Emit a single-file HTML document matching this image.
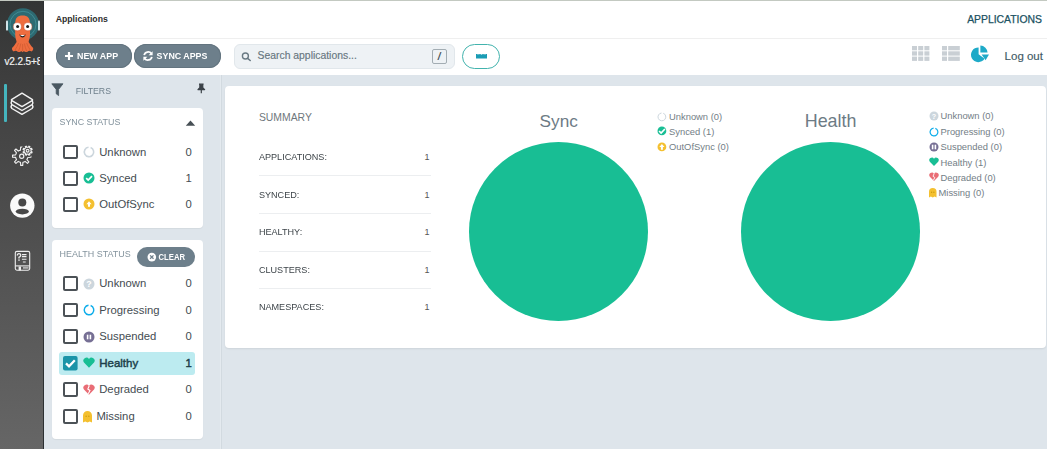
<!DOCTYPE html>
<html><head><meta charset="utf-8"><style>
html,body{margin:0;padding:0}
body{width:1047px;height:449px;overflow:hidden;position:relative;background:#dee5eb;font-family:"Liberation Sans",sans-serif}
.t{position:absolute;white-space:nowrap;line-height:1}
.b{position:absolute}
svg.b{overflow:visible}
</style></head><body>
<div class="b" style="left:0px;top:0px;width:1047px;height:1px;background:#c3c9c1"></div>
<div class="b" style="left:44px;top:1px;width:1003px;height:37px;background:#fff"></div>
<div class="b" style="left:44px;top:38px;width:1003px;height:1px;background:#efefef"></div>
<div class="b" style="left:44px;top:39px;width:1003px;height:36.2px;background:#fff"></div>
<div class="b" style="left:0px;top:1px;width:43px;height:448px;background:linear-gradient(#333535 0px,#3c3c3c 60px,#454545 130px,#4f4f4f 234px,#5b5b5b 344px,#666 449px)"></div>
<div class="b" style="left:43px;top:1px;width:1px;height:448px;background:#2c3032"></div>
<div class="t" style="left:55.7px;top:15.34px;font-size:8.7px;color:#2d2d2d;font-weight:bold;">Applications</div>
<div class="t" style="left:1042px;top:14.60px;font-size:10.4px;color:#1b5262;font-weight:normal;transform:translateX(-100%);transform-origin:0 8.80px;-webkit-text-stroke:0.25px #1b5262">APPLICATIONS</div>
<div class="b" style="left:56px;top:44.2px;width:75.5px;height:24px;background:#6d7f8b;border-radius:13px;box-shadow:inset 0 0 0 1px #63747f"></div>
<div class="b" style="left:133.6px;top:44.2px;width:87.4px;height:24px;background:#6d7f8b;border-radius:13px;box-shadow:inset 0 0 0 1px #63747f"></div>
<svg class="b" style="left:64px;top:51px" width="10" height="10" viewBox="0 0 10 10"><path d="M5 1v8M1 5h8" stroke="#fff" stroke-width="2.2" stroke-linecap="butt"/></svg>
<div class="t" style="left:77px;top:51.87px;font-size:8.9px;color:#fff;font-weight:bold;transform: scaleY(1.06);transform-origin:0 7.53px;">NEW APP</div>
<svg class="b" style="left:142px;top:50px" width="12" height="12" viewBox="0 0 12 12"><path d="M2.2 5.2A4 4 0 0 1 9.4 3.6" stroke="#fff" stroke-width="1.8" fill="none"/><path d="M10.6 1.2v4h-4z" fill="#fff"/><path d="M9.8 6.8A4 4 0 0 1 2.6 8.4" stroke="#fff" stroke-width="1.8" fill="none"/><path d="M1.4 10.8v-4h4z" fill="#fff"/></svg>
<div class="t" style="left:156.6px;top:51.91px;font-size:8.85px;color:#fff;font-weight:bold;transform: scaleY(1.06);transform-origin:0 7.49px;">SYNC APPS</div>
<div class="b" style="left:234px;top:44px;width:220.5px;height:25px;background:#eef2f5;border:1px solid #e1e7eb;box-sizing:border-box;border-radius:6px"></div>
<svg class="b" style="left:241px;top:51.8px" width="10" height="9" viewBox="0 0 10 9"><circle cx="4.4" cy="4" r="3" stroke="#6a7a84" stroke-width="1.4" fill="none"/><path d="M6.6 6.3l2.6 2.2" stroke="#6a7a84" stroke-width="1.6" stroke-linecap="round"/></svg>
<div class="t" style="left:257.5px;top:51.40px;font-size:10.4px;color:#67767f;font-weight:normal;-webkit-text-stroke:0.15px #67767f">Search applications...</div>
<div class="b" style="left:431.7px;top:49.4px;width:15px;height:14.3px;border:1px solid #a3adb3;border-radius:2px;box-sizing:border-box"></div>
<div class="t" style="left:439.2px;top:52.03px;font-size:10px;color:#4a5258;font-weight:bold;transform:translateX(-50%);transform-origin:0 8.46px;font-style:italic">/</div>
<div class="b" style="left:462px;top:44.2px;width:37.5px;height:24.6px;border:1px solid #42b3ad;border-radius:13px;box-sizing:border-box;background:#fff"></div>
<svg class="b" style="left:475.5px;top:53px" width="11" height="6" viewBox="0 0 11 6"><rect x="0" y="1" width="11" height="4.5" fill="#1a9cb4"/><path d="M2 0.6v1.4M4 0.6v1M5.5 0.6v1.4M7 0.6v1M9 0.6v1.4" stroke="#fff" stroke-width="0.6"/></svg>
<svg class="b" style="left:912px;top:46px" width="18" height="15" viewBox="0 0 18 15"><rect x="0.0" y="0.0" width="5" height="4.3" fill="#c9cfd4"/><rect x="6.2" y="0.0" width="5" height="4.3" fill="#c9cfd4"/><rect x="12.4" y="0.0" width="5" height="4.3" fill="#c9cfd4"/><rect x="0.0" y="5.3" width="5" height="4.3" fill="#c9cfd4"/><rect x="6.2" y="5.3" width="5" height="4.3" fill="#c9cfd4"/><rect x="12.4" y="5.3" width="5" height="4.3" fill="#c9cfd4"/><rect x="0.0" y="10.6" width="5" height="4.3" fill="#c9cfd4"/><rect x="6.2" y="10.6" width="5" height="4.3" fill="#c9cfd4"/><rect x="12.4" y="10.6" width="5" height="4.3" fill="#c9cfd4"/></svg>
<svg class="b" style="left:942px;top:46px" width="18" height="15" viewBox="0 0 18 15"><rect x="0" y="0.0" width="5" height="4.3" fill="#c9cfd4"/><rect x="6.2" y="0.0" width="11.6" height="4.3" fill="#c9cfd4"/><rect x="0" y="5.3" width="5" height="4.3" fill="#c9cfd4"/><rect x="6.2" y="5.3" width="11.6" height="4.3" fill="#c9cfd4"/><rect x="0" y="10.6" width="5" height="4.3" fill="#c9cfd4"/><rect x="6.2" y="10.6" width="11.6" height="4.3" fill="#c9cfd4"/></svg>
<svg class="b" style="left:971px;top:45px" width="19" height="18" viewBox="0 0 19 18"><path d="M7.6 2.4A7.4 7.4 0 1 0 13.6 13.8L7.6 9.2Z" fill="#1eaac8"/><path d="M9.4 0.6A7.4 7.4 0 0 1 16.6 7.6H9.4Z" fill="#1eaac8"/><path d="M10.6 9.4H18L14.6 15.2Z" fill="#1eaac8"/></svg>
<div class="t" style="left:1004.6px;top:50.87px;font-size:11.5px;color:#3f5a66;font-weight:normal;-webkit-text-stroke:0.15px #3f5a66">Log out</div>
<div class="b" style="left:4.4px;top:83.6px;width:2.2px;height:38.6px;background:#45b5be;border-radius:1.1px"></div>
<svg class="b" style="left:9px;top:91px" width="26" height="26" viewBox="0 0 26 26"><g fill="none" stroke="#f2f2f2" stroke-width="1.4" stroke-linejoin="round" stroke-linecap="round"><path d="M13.00 2.10 L23.10 8.30 Q24.10 9.00 23.10 9.70 L13.00 15.60 L2.90 9.70 Q1.90 9.00 2.90 8.30 Z"/><path d="M2.60 10.10 Q1.50 11.60 2.90 13.60 L13.00 19.50 L23.10 13.60 Q24.50 11.60 23.40 10.10"/><path d="M2.60 14.00 Q1.50 15.50 2.90 17.50 L13.00 23.40 L23.10 17.50 Q24.50 15.50 23.40 14.00"/></g></svg>
<svg class="b" style="left:8px;top:142px" width="28" height="28" viewBox="0 0 28 28"><defs><mask id="gm"><rect width="28" height="28" fill="#fff"/><circle cx="19.6" cy="8.7" r="6.6" fill="#000"/></mask></defs><g fill="none" stroke="#eee" stroke-width="1.15" stroke-linejoin="round"><path mask="url(#gm)" d="M19.78 12.99 L22.84 13.19 L22.84 15.21 L19.78 15.41 A6.20 6.20 0 0 1 18.86 17.64 L20.88 19.95 L19.45 21.38 L17.14 19.36 A6.20 6.20 0 0 1 14.91 20.28 L14.71 23.34 L12.69 23.34 L12.49 20.28 A6.20 6.20 0 0 1 10.26 19.36 L7.95 21.38 L6.52 19.95 L8.54 17.64 A6.20 6.20 0 0 1 7.62 15.41 L4.56 15.21 L4.56 13.19 L7.62 12.99 A6.20 6.20 0 0 1 8.54 10.76 L6.52 8.45 L7.95 7.02 L10.26 9.04 A6.20 6.20 0 0 1 12.49 8.12 L12.69 5.06 L14.71 5.06 L14.91 8.12 A6.20 6.20 0 0 1 17.14 9.04 L19.45 7.02 L20.88 8.45 L18.86 10.76 A6.20 6.20 0 0 1 19.78 12.99 Z"/><circle cx="13.7" cy="14.2" r="2.1"/><path d="M22.94 9.35 L24.13 9.96 L23.71 10.99 L22.43 10.58 A3.40 3.40 0 0 1 21.50 11.52 L21.91 12.79 L20.89 13.22 L20.27 12.03 A3.40 3.40 0 0 1 18.95 12.04 L18.34 13.23 L17.31 12.81 L17.72 11.53 A3.40 3.40 0 0 1 16.78 10.60 L15.51 11.01 L15.08 9.99 L16.27 9.37 A3.40 3.40 0 0 1 16.26 8.05 L15.07 7.44 L15.49 6.41 L16.77 6.82 A3.40 3.40 0 0 1 17.70 5.88 L17.29 4.61 L18.31 4.18 L18.93 5.37 A3.40 3.40 0 0 1 20.25 5.36 L20.86 4.17 L21.89 4.59 L21.48 5.87 A3.40 3.40 0 0 1 22.42 6.80 L23.69 6.39 L24.12 7.41 L22.93 8.03 A3.40 3.40 0 0 1 22.94 9.35 Z"/><circle cx="19.6" cy="8.7" r="1.4"/></g></svg>
<svg class="b" style="left:10px;top:193px" width="25" height="25" viewBox="0 0 25 25"><circle cx="12.3" cy="12.6" r="12.2" fill="#fafafa"/><circle cx="12.3" cy="9.6" r="4" fill="#474747"/><ellipse cx="12.3" cy="18.6" rx="6.6" ry="2.8" fill="#474747"/></svg>
<svg class="b" style="left:13px;top:249px" width="20" height="24" viewBox="0 0 20 24"><g fill="none" stroke="#eee" stroke-width="1.1"><rect x="2.3" y="2.4" width="14.4" height="18.8" rx="1.6"/><path d="M2.3 16.9H16.7"/><path d="M4.3 6.6Q4.3 4.6 6 4.6Q7.7 4.6 7.7 6.3Q7.7 7.6 6 8.3V9.6" stroke-width="1.3"/></g><rect x="5.3" y="10.4" width="1.4" height="1.4" fill="#eee"/><path d="M8.9 5.6h4.6M8.9 7.6h4.6M8.9 10.3h4.6M9.9 13h2.8" stroke="#eee" stroke-width="1.1"/><path d="M10 18.9h5.6" stroke="#bbb" stroke-width="1.6"/><rect x="5.6" y="17.5" width="2.4" height="4" fill="#eee"/></svg>
<svg class="b" style="left:4px;top:5px" width="38" height="52" viewBox="0 0 38 52"><circle cx="19" cy="19.3" r="16" fill="#2d6a72"/><circle cx="19" cy="19.3" r="13" fill="none" stroke="#428e96" stroke-width="0.9"/><rect x="2" y="15.6" width="2" height="10" rx="0.9" fill="#cfe3e8"/><rect x="34" y="15.6" width="2" height="10" rx="0.9" fill="#cfe3e8"/><path d="M11.2 19C11.2 13 13.5 10.6 18.6 10.6S26 13 26 19V30C26 33 24.8 35 24.6 37Q27 41 29.2 43Q29.7 45.6 27.6 46.6Q26 45.2 24.5 46Q23 47.6 21 46.7Q19.6 45.7 18.6 47.2Q17.6 45.7 16.2 46.7Q14.2 47.6 12.7 46Q11.2 45.2 9.6 46.6Q7.5 45.6 8 43Q10.2 41 12.6 37C12.4 35 11.2 33 11.2 30Z" fill="#ee6d3f"/><path d="M14.6 38Q13 42 11 45M16.8 38.5Q16 43 14.5 46M18.6 39V46M20.4 38.5Q21.2 43 22.7 46M22.6 38Q24.2 42 26.2 45" stroke="#c9552e" stroke-width="0.6" fill="none"/><circle cx="13.3" cy="21.7" r="4.1" fill="#fff" stroke="#c94f2a" stroke-width="0.5"/><circle cx="23.9" cy="21.7" r="4.1" fill="#fff" stroke="#c94f2a" stroke-width="0.5"/><circle cx="13.6" cy="21.5" r="1.5" fill="#1a1a1a"/><circle cx="23.6" cy="21.5" r="1.5" fill="#1a1a1a"/><path d="M15 29.4Q18.5 35.6 22 29.4Q18.5 30.6 15 29.4Z" fill="#1a1a1a"/><path d="M15.9 30H21.1Q18.5 32.3 15.9 30Z" fill="#fff"/></svg>
<div class="t" style="left:4.4px;top:56.73px;font-size:10px;color:#f0f0f0;font-weight:normal;letter-spacing:-0.1px;width:35.8px;overflow:hidden;-webkit-text-stroke:0.2px #f0f0f0">v2.2.5+8</div>
<div class="b" style="left:220px;top:75px;width:1px;height:374px;background:#e4eaef"></div>
<div class="b" style="left:221px;top:75px;width:1px;height:374px;background:#d2dae0"></div>
<svg class="b" style="left:51px;top:83px" width="13" height="13" viewBox="0 0 13 13"><path d="M0.8 0.8H12L7.6 6.4V12.6L5.2 10.8V6.4Z" fill="#4a5862" stroke="#4a5862" stroke-width="0.8" stroke-linejoin="round"/></svg>
<div class="t" style="left:75.7px;top:86.59px;font-size:8.75px;color:#6d7f8b;font-weight:normal;transform: scaleY(1.08);transform-origin:0 7.41px;">FILTERS</div>
<svg class="b" style="left:196px;top:83px" width="11" height="11" viewBox="0 0 11 11"><path d="M3 1.2h4.6M3.9 1.2v3.4L2 6.6h6.6L6.7 4.6V1.2" stroke="#3b4248" stroke-width="1.3" fill="#3b4248" stroke-linejoin="round"/><path d="M5.3 6.6v3.6" stroke="#3b4248" stroke-width="1.2"/></svg>
<div class="b" style="left:51.6px;top:107.6px;width:151.4px;height:120px;background:#fff;border-radius:4px;box-shadow:0 1px 1px rgba(0,0,0,0.05)"></div>
<div class="t" style="left:59.5px;top:117.87px;font-size:8.9px;color:#83939d;font-weight:normal;transform: scaleY(1.05);transform-origin:0 7.53px;">SYNC STATUS</div>
<svg class="b" style="left:185px;top:120px" width="11" height="6" viewBox="0 0 11 6"><path d="M0.8 5.8L5.5 0.6L10.2 5.8Z" fill="#474f55"/></svg>
<div class="b" style="left:63px;top:144.5px;width:14.6px;height:14.6px;border:2px solid #4c5257;border-radius:2px;box-sizing:border-box"></div>
<svg class="b" style="left:83.20px;top:145.80px" width="12.0" height="12.0" viewBox="0 0 12.0 12.0"><path d="M7.61 1.58A4.7 4.7 0 1 1 5.53 1.32" fill="none" stroke="#ccd6dd" stroke-width="1.6"/></svg>
<div class="t" style="left:99.2px;top:146.53px;font-size:11.3px;color:#444c52;font-weight:normal;">Unknown</div>
<div class="t" style="left:191.8px;top:146.53px;font-size:11.3px;color:#444c52;font-weight:normal;transform:translateX(-100%);transform-origin:0 9.57px;">0</div>
<div class="b" style="left:63px;top:171.1px;width:14.6px;height:14.6px;border:2px solid #4c5257;border-radius:2px;box-sizing:border-box"></div>
<svg class="b" style="left:83.20px;top:172.40px" width="12.0" height="12.0" viewBox="0 0 12.0 12.0"><circle cx="6.0" cy="6.0" r="5.5" fill="#18be94"/><path d="M3.2 6.1L5.2 8.1L9.0 4.1" stroke="#fff" stroke-width="1.7" fill="none"/></svg>
<div class="t" style="left:99.2px;top:173.13px;font-size:11.3px;color:#444c52;font-weight:normal;">Synced</div>
<div class="t" style="left:191.8px;top:173.13px;font-size:11.3px;color:#444c52;font-weight:normal;transform:translateX(-100%);transform-origin:0 9.57px;">1</div>
<div class="b" style="left:63px;top:197.1px;width:14.6px;height:14.6px;border:2px solid #4c5257;border-radius:2px;box-sizing:border-box"></div>
<svg class="b" style="left:83.20px;top:198.40px" width="12.0" height="12.0" viewBox="0 0 12.0 12.0"><circle cx="6.0" cy="6.0" r="5.5" fill="#f4c030"/><path d="M6.0 3.2L8.6 6.2H7.0V8.8H5.0V6.2H3.4Z" fill="#fff"/></svg>
<div class="t" style="left:99.2px;top:199.13px;font-size:11.3px;color:#444c52;font-weight:normal;">OutOfSync</div>
<div class="t" style="left:191.8px;top:199.13px;font-size:11.3px;color:#444c52;font-weight:normal;transform:translateX(-100%);transform-origin:0 9.57px;">0</div>
<div class="b" style="left:51.9px;top:239.6px;width:151px;height:199px;background:#fff;border-radius:4px;box-shadow:0 1px 1px rgba(0,0,0,0.05)"></div>
<div class="t" style="left:59.6px;top:249.62px;font-size:8.95px;color:#83939d;font-weight:normal;transform: scaleY(1.05);transform-origin:0 7.58px;">HEALTH STATUS</div>
<div class="b" style="left:136.6px;top:247.3px;width:58.4px;height:19.5px;background:#6d7f8b;border-radius:10px"></div>
<svg class="b" style="left:147px;top:251.5px" width="10" height="10" viewBox="0 0 10 10"><circle cx="4.8" cy="5.1" r="4.3" fill="#fff"/><path d="M3.1 3.4L6.5 6.8M6.5 3.4L3.1 6.8" stroke="#6d7f8b" stroke-width="1.3"/></svg>
<div class="t" style="left:158.5px;top:253.88px;font-size:7.7px;color:#fff;font-weight:bold;transform: scaleY(1.2);transform-origin:0 6.52px;">CLEAR</div>
<div class="b" style="left:59.2px;top:351.8px;width:136.3px;height:23px;background:#bcebf0;border-radius:3px"></div>
<div class="b" style="left:63px;top:276.2px;width:14.6px;height:14.6px;border:2px solid #4c5257;border-radius:2px;box-sizing:border-box"></div>
<svg class="b" style="left:83.20px;top:277.50px" width="12.0" height="12.0" viewBox="0 0 12.0 12.0"><circle cx="6.0" cy="6.0" r="5.5" fill="#ccd6dd"/><text x="6.0" y="9.2" text-anchor="middle" font-size="8.8" font-weight="bold" font-family="Liberation Sans" fill="#fff">?</text></svg>
<div class="t" style="left:99.2px;top:278.23px;font-size:11.3px;color:#444c52;font-weight:normal;">Unknown</div>
<div class="t" style="left:191.8px;top:278.23px;font-size:11.3px;color:#444c52;font-weight:normal;transform:translateX(-100%);transform-origin:0 9.57px;">0</div>
<div class="b" style="left:63px;top:302.8px;width:14.6px;height:14.6px;border:2px solid #4c5257;border-radius:2px;box-sizing:border-box"></div>
<svg class="b" style="left:83.20px;top:304.10px" width="12.0" height="12.0" viewBox="0 0 12.0 12.0"><path d="M7.64 1.51A4.775 4.775 0 1 1 5.52 1.25" fill="none" stroke="#0dadea" stroke-width="1.45"/></svg>
<div class="t" style="left:99.2px;top:304.83px;font-size:11.3px;color:#444c52;font-weight:normal;">Progressing</div>
<div class="t" style="left:191.8px;top:304.83px;font-size:11.3px;color:#444c52;font-weight:normal;transform:translateX(-100%);transform-origin:0 9.57px;">0</div>
<div class="b" style="left:63px;top:329.3px;width:14.6px;height:14.6px;border:2px solid #4c5257;border-radius:2px;box-sizing:border-box"></div>
<svg class="b" style="left:83.20px;top:330.60px" width="12.0" height="12.0" viewBox="0 0 12.0 12.0"><circle cx="6.0" cy="6.0" r="5.5" fill="#766f94"/><rect x="3.8" y="3.7" width="1.6" height="4.6" fill="#fff"/><rect x="6.6" y="3.7" width="1.6" height="4.6" fill="#fff"/></svg>
<div class="t" style="left:99.2px;top:331.33px;font-size:11.3px;color:#444c52;font-weight:normal;">Suspended</div>
<div class="t" style="left:191.8px;top:331.33px;font-size:11.3px;color:#444c52;font-weight:normal;transform:translateX(-100%);transform-origin:0 9.57px;">0</div>
<svg class="b" style="left:63px;top:355.8px" width="15" height="15" viewBox="0 0 15 15"><rect x="0" y="0" width="14.6" height="14.6" rx="2" fill="#1a94a8"/><path d="M3 7.4L6 10.3L11.8 4.3" stroke="#fff" stroke-width="2.3" fill="none"/></svg>
<svg class="b" style="left:83.20px;top:358.00px" width="12" height="10.2" viewBox="0 0 12 10.2"><path d="M6.0 10.2L0.96 5.04A2.88 2.88 0 0 1 6.0 1.44A2.88 2.88 0 0 1 11.040000000000001 5.04Z" fill="#18be94" transform="translate(0 -0.5)"/></svg>
<div class="t" style="left:99.2px;top:357.67px;font-size:11.5px;color:#1d3f4b;font-weight:normal;-webkit-text-stroke:0.45px #1d3f4b">Healthy</div>
<div class="t" style="left:191.8px;top:357.83px;font-size:11.3px;color:#1d3f4b;font-weight:normal;transform:translateX(-100%);transform-origin:0 9.57px;-webkit-text-stroke:0.45px #1d3f4b">1</div>
<div class="b" style="left:63px;top:382.4px;width:14.6px;height:14.6px;border:2px solid #4c5257;border-radius:2px;box-sizing:border-box"></div>
<svg class="b" style="left:83.20px;top:384.60px" width="12" height="10.2" viewBox="0 0 12 10.2"><g transform="translate(0 -0.5)"><path d="M6.0 10.2L0.96 5.04A2.88 2.88 0 0 1 6.0 1.44A2.88 2.88 0 0 1 11.040000000000001 5.04Z" fill="#e96d76"/><path d="M6.24 1.2000000000000002L4.800000000000001 4.5600000000000005L6.959999999999999 6.0L5.28 9.36" stroke="#fff" stroke-width="1.08" fill="none"/></g></svg>
<div class="t" style="left:99.2px;top:384.43px;font-size:11.3px;color:#444c52;font-weight:normal;">Degraded</div>
<div class="t" style="left:191.8px;top:384.43px;font-size:11.3px;color:#444c52;font-weight:normal;transform:translateX(-100%);transform-origin:0 9.57px;">0</div>
<div class="b" style="left:63px;top:409.3px;width:14.6px;height:14.6px;border:2px solid #4c5257;border-radius:2px;box-sizing:border-box"></div>
<svg class="b" style="left:83.30px;top:410.85px" width="9" height="11.5" viewBox="0 0 9 11.5"><path d="M0 11.5V4.5A4.5 4.5 0 0 1 9 4.5V11.5L6.75 10.5L4.5 11.5L2.25 10.5Z" fill="#f4c030"/><circle cx="3.15" cy="5.175" r="0.7" fill="#c99a10"/><circle cx="5.8500000000000005" cy="5.175" r="0.7" fill="#c99a10"/></svg>
<div class="t" style="left:96.4px;top:411.33px;font-size:11.3px;color:#444c52;font-weight:normal;">Missing</div>
<div class="t" style="left:191.8px;top:411.33px;font-size:11.3px;color:#444c52;font-weight:normal;transform:translateX(-100%);transform-origin:0 9.57px;">0</div>
<div class="b" style="left:225px;top:86.2px;width:820.5px;height:261.8px;background:#fff;border-radius:4px;box-shadow:0 1px 2px rgba(0,0,0,0.08)"></div>
<div class="t" style="left:258.9px;top:113.20px;font-size:10.4px;color:#6f777d;font-weight:normal;">SUMMARY</div>
<div class="t" style="left:258.9px;top:152.90px;font-size:9.1px;color:#3d4449;font-weight:normal;transform: scaleY(1.05);transform-origin:0 7.70px;">APPLICATIONS:</div>
<div class="t" style="left:429.5px;top:152.98px;font-size:9px;color:#555;font-weight:normal;transform:translateX(-100%) scaleY(1.07);transform-origin:0 7.62px;">1</div>
<div class="b" style="left:258.9px;top:175.3px;width:172.6px;height:1px;background:#eceef0"></div>
<div class="t" style="left:258.9px;top:190.60px;font-size:9.1px;color:#3d4449;font-weight:normal;transform: scaleY(1.05);transform-origin:0 7.70px;">SYNCED:</div>
<div class="t" style="left:429.5px;top:190.68px;font-size:9px;color:#555;font-weight:normal;transform:translateX(-100%) scaleY(1.07);transform-origin:0 7.62px;">1</div>
<div class="b" style="left:258.9px;top:213.0px;width:172.6px;height:1px;background:#eceef0"></div>
<div class="t" style="left:258.9px;top:228.40px;font-size:9.1px;color:#3d4449;font-weight:normal;transform: scaleY(1.05);transform-origin:0 7.70px;">HEALTHY:</div>
<div class="t" style="left:429.5px;top:228.48px;font-size:9px;color:#555;font-weight:normal;transform:translateX(-100%) scaleY(1.07);transform-origin:0 7.62px;">1</div>
<div class="b" style="left:258.9px;top:250.8px;width:172.6px;height:1px;background:#eceef0"></div>
<div class="t" style="left:258.9px;top:265.60px;font-size:9.1px;color:#3d4449;font-weight:normal;transform: scaleY(1.05);transform-origin:0 7.70px;">CLUSTERS:</div>
<div class="t" style="left:429.5px;top:265.68px;font-size:9px;color:#555;font-weight:normal;transform:translateX(-100%) scaleY(1.07);transform-origin:0 7.62px;">1</div>
<div class="b" style="left:258.9px;top:288.0px;width:172.6px;height:1px;background:#eceef0"></div>
<div class="t" style="left:258.9px;top:303.40px;font-size:9.1px;color:#3d4449;font-weight:normal;transform: scaleY(1.05);transform-origin:0 7.70px;">NAMESPACES:</div>
<div class="t" style="left:429.5px;top:303.48px;font-size:9px;color:#555;font-weight:normal;transform:translateX(-100%) scaleY(1.07);transform-origin:0 7.62px;">1</div>
<div class="t" style="left:558.7px;top:112.74px;font-size:17.2px;color:#6d7b85;font-weight:normal;transform:translateX(-50%);transform-origin:0 14.56px;">Sync</div>
<div class="b" style="left:469px;top:141.5px;width:179px;height:179px;background:#18be94;border-radius:50%"></div>
<div class="t" style="left:830.6px;top:112.95px;font-size:17.9px;color:#6d7b85;font-weight:normal;transform:translateX(-50%);transform-origin:0 15.15px;">Health</div>
<div class="b" style="left:741px;top:142px;width:179px;height:178.6px;background:#18be94;border-radius:50%"></div>
<svg class="b" style="left:656.60px;top:111.70px" width="9.8" height="9.8" viewBox="0 0 9.8 9.8"><path d="M6.24 1.24A3.9000000000000004 3.9000000000000004 0 1 1 4.51 1.02" fill="none" stroke="#ccd6dd" stroke-width="1.0"/></svg>
<div class="t" style="left:669px;top:111.94px;font-size:9.4px;color:#737e86;font-weight:normal;">Unknown (0)</div>
<svg class="b" style="left:656.60px;top:126.40px" width="9.8" height="9.8" viewBox="0 0 9.8 9.8"><circle cx="4.9" cy="4.9" r="4.4" fill="#18be94"/><path d="M2.1000000000000005 5.0L4.1000000000000005 7.0L7.9 3.0000000000000004" stroke="#fff" stroke-width="1.7" fill="none"/></svg>
<div class="t" style="left:669px;top:126.64px;font-size:9.4px;color:#737e86;font-weight:normal;">Synced (1)</div>
<svg class="b" style="left:656.60px;top:141.70px" width="9.8" height="9.8" viewBox="0 0 9.8 9.8"><circle cx="4.9" cy="4.9" r="4.4" fill="#f4c030"/><path d="M4.9 2.1000000000000005L7.5 5.1000000000000005H5.9V7.7H3.9000000000000004V5.1000000000000005H2.3000000000000003Z" fill="#fff"/></svg>
<div class="t" style="left:669px;top:141.94px;font-size:9.4px;color:#737e86;font-weight:normal;">OutOfSync (0)</div>
<svg class="b" style="left:928.50px;top:111.10px" width="10.0" height="10.0" viewBox="0 0 10.0 10.0"><circle cx="5.0" cy="5.0" r="4.5" fill="#ccd6dd"/><text x="5.0" y="8.2" text-anchor="middle" font-size="7.2" font-weight="bold" font-family="Liberation Sans" fill="#fff">?</text></svg>
<div class="t" style="left:940.5px;top:111.44px;font-size:9.4px;color:#737e86;font-weight:normal;">Unknown (0)</div>
<svg class="b" style="left:928.50px;top:126.70px" width="10.0" height="10.0" viewBox="0 0 10.0 10.0"><path d="M6.34 1.34A3.9 3.9 0 1 1 4.61 1.12" fill="none" stroke="#0dadea" stroke-width="1.2"/></svg>
<div class="t" style="left:940.5px;top:127.04px;font-size:9.4px;color:#737e86;font-weight:normal;">Progressing (0)</div>
<svg class="b" style="left:928.50px;top:141.80px" width="10.0" height="10.0" viewBox="0 0 10.0 10.0"><circle cx="5.0" cy="5.0" r="4.5" fill="#766f94"/><rect x="2.8" y="2.7" width="1.6" height="4.6" fill="#fff"/><rect x="5.6" y="2.7" width="1.6" height="4.6" fill="#fff"/></svg>
<div class="t" style="left:940.5px;top:142.14px;font-size:9.4px;color:#737e86;font-weight:normal;">Suspended (0)</div>
<svg class="b" style="left:928.50px;top:157.95px" width="10" height="8.5" viewBox="0 0 10 8.5"><path d="M5.0 8.5L0.8 4.2A2.4 2.4 0 0 1 5.0 1.2A2.4 2.4 0 0 1 9.200000000000001 4.2Z" fill="#18be94" transform="translate(0 -0.5)"/></svg>
<div class="t" style="left:940.5px;top:157.54px;font-size:9.4px;color:#737e86;font-weight:normal;">Healthy (1)</div>
<svg class="b" style="left:928.50px;top:173.15px" width="10" height="8.5" viewBox="0 0 10 8.5"><g transform="translate(0 -0.5)"><path d="M5.0 8.5L0.8 4.2A2.4 2.4 0 0 1 5.0 1.2A2.4 2.4 0 0 1 9.200000000000001 4.2Z" fill="#e96d76"/><path d="M5.2 1.0L4.0 3.8L5.8 5.0L4.4 7.800000000000001" stroke="#fff" stroke-width="0.90" fill="none"/></g></svg>
<div class="t" style="left:940.5px;top:172.74px;font-size:9.4px;color:#737e86;font-weight:normal;">Degraded (0)</div>
<svg class="b" style="left:928.75px;top:188.25px" width="7.5" height="9.5" viewBox="0 0 7.5 9.5"><path d="M0 9.5V3.75A3.75 3.75 0 0 1 7.5 3.75V9.5L5.625 8.5L3.75 9.5L1.875 8.5Z" fill="#f4c030"/><circle cx="2.625" cy="4.275" r="0.7" fill="#c99a10"/><circle cx="4.875" cy="4.275" r="0.7" fill="#c99a10"/></svg>
<div class="t" style="left:938.5px;top:188.34px;font-size:9.4px;color:#737e86;font-weight:normal;">Missing (0)</div>
</body></html>
